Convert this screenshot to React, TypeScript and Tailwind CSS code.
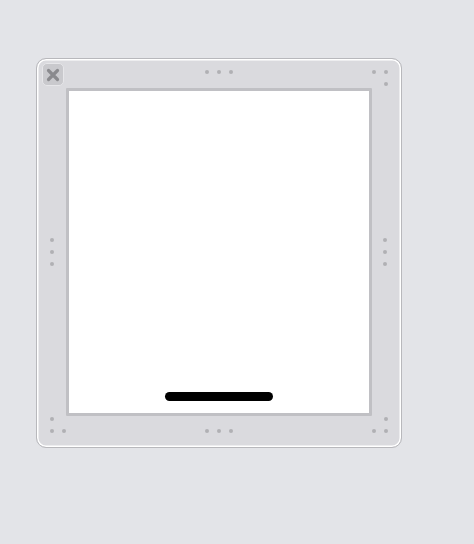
import React from "react";

function Dot() {
  return <span className="block h-[4px] w-[4px] rounded-full bg-[#b0b0b4]" />;
}

export default function App() {
  return (
    <div className="h-[544px] w-[474px] bg-[#e3e4e8] pl-[36px] pt-[58px]" style={{ fontFamily: "Inter, sans-serif" }}>
      <div className="relative h-[390px] w-[366px] rounded-[10px] border border-[#b8b8bc] bg-[#dadade] shadow-[inset_0_0_0_1.5px_#ffffff] px-[29px] pt-[29px]">
        {/* close button */}
        <button className="absolute left-[5px] top-[4px] flex h-[23px] w-[22px] items-center justify-center rounded-[5px] border border-[#e6e6e9] bg-[#c9c9cd]">
          <svg width="16" height="16" viewBox="0 0 16 16">
            <path d="M3.5 3.5 L12.5 12.5 M12.5 3.5 L3.5 12.5" stroke="#8a8a8e" strokeWidth="3.2" strokeLinecap="round" />
          </svg>
        </button>

        {/* content */}
        <div className="flex h-[328px] w-[306px] flex-col items-center justify-end rounded-[1px] border-[3px] border-[#c0c0c4] bg-white pb-[12px]">
          <div className="h-[9px] w-[108px] rounded-full bg-black" />
        </div>

        {/* handles: top center */}
        <div className="absolute left-[168px] top-[11px] flex gap-[8px]">
          <Dot /><Dot /><Dot />
        </div>
        {/* top right */}
        <div className="absolute left-[335px] top-[11px] flex flex-col items-end gap-[8px]">
          <div className="flex gap-[8px]"><Dot /><Dot /></div>
          <Dot />
        </div>
        {/* left middle */}
        <div className="absolute left-[13px] top-[179px] flex flex-col gap-[8px]">
          <Dot /><Dot /><Dot />
        </div>
        {/* right middle */}
        <div className="absolute left-[346px] top-[179px] flex flex-col gap-[8px]">
          <Dot /><Dot /><Dot />
        </div>
        {/* bottom left */}
        <div className="absolute left-[13px] top-[358px] flex flex-col items-start gap-[8px]">
          <Dot />
          <div className="flex gap-[8px]"><Dot /><Dot /></div>
        </div>
        {/* bottom center */}
        <div className="absolute left-[168px] top-[370px] flex gap-[8px]">
          <Dot /><Dot /><Dot />
        </div>
        {/* bottom right */}
        <div className="absolute left-[335px] top-[358px] flex flex-col items-end gap-[8px]">
          <Dot />
          <div className="flex gap-[8px]"><Dot /><Dot /></div>
        </div>
      </div>
    </div>
  );
}
